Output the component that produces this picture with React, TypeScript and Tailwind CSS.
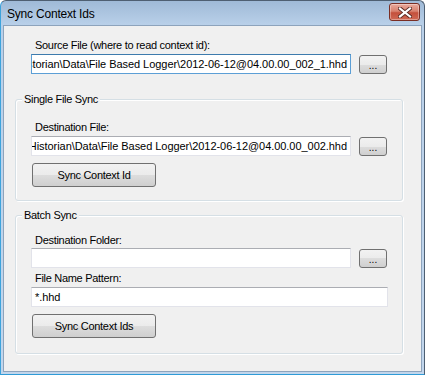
import React from 'react';

const FONT = { fontFamily: '"Liberation Sans", Arial, sans-serif' };

function Label({ children, className = '' }: { children: React.ReactNode; className?: string }) {
  return (
    <div className={`h-[13px] leading-[13px] text-[11px] tracking-[-0.3px] text-black pl-[4px] ${className}`}>
      {children}
    </div>
  );
}

function TextBox({
  children,
  focused = false,
  className = '',
}: {
  children?: React.ReactNode;
  focused?: boolean;
  className?: string;
}) {
  const border = focused
    ? 'border-[#5c9fd6] border-t-[#3d7bad]'
    : 'border-[#e2e3ea] border-t-[#abadb3]';
  return (
    <div
      className={`h-[20px] bg-white border ${border} flex items-center justify-end overflow-hidden whitespace-nowrap pr-[3px] pl-[2px] text-[11px] tracking-[-0.05px] text-black ${className}`}
    >
      {children}
    </div>
  );
}

function BrowseButton({ className = '' }: { className?: string }) {
  return (
    <div
      className={`w-[28px] h-[19px] rounded-[3px] border border-[#707070] bg-[linear-gradient(#f2f2f2_0%,#ebebeb_50%,#dddddd_50%,#cfcfcf_100%)] flex items-end justify-center pb-[3px] text-[10px] leading-[8px] text-black ${className}`}
    >
      ...
    </div>
  );
}

function PushButton({ label, className = '' }: { label: string; className?: string }) {
  return (
    <div
      className={`h-[24px] rounded-[3px] border border-[#707070] bg-[linear-gradient(#f2f2f2_0%,#ebebeb_50%,#dddddd_50%,#cfcfcf_100%)] flex items-center justify-center text-[11px] tracking-[-0.3px] text-black ${className}`}
    >
      {label}
    </div>
  );
}

function GroupBox({ title, children, className = '' }: { title: string; children: React.ReactNode; className?: string }) {
  return (
    <div className={`relative w-[388px] border border-[#d5dfe5] rounded-[3px] shadow-[inset_1px_1px_0_#ffffff,1px_1px_0_#ffffff] ${className}`}>
      <span className="absolute left-[6px] top-[-7px] px-[2px] bg-[#f0f0f0] h-[13px] leading-[13px] text-[11px] tracking-[-0.3px] text-black">
        {title}
      </span>
      {children}
    </div>
  );
}

function CloseGlyph() {
  return (
    <svg width="14" height="11" viewBox="0 0 14 11">
      <path d="M2 1.5 L12 9.5 M12 1.5 L2 9.5" stroke="#5a2a24" strokeWidth="4" strokeLinecap="square" />
      <path d="M2 1.5 L12 9.5 M12 1.5 L2 9.5" stroke="#ffffff" strokeWidth="2.2" strokeLinecap="square" />
    </svg>
  );
}

export default function App() {
  return (
    <div style={FONT} className="w-[425px] h-[375px] bg-white">
      <div className="w-[425px] h-[375px] flex flex-col border border-[#4e5f72] border-b-[#2f9bd7] border-l-[#3da3dc] rounded-t-[6px] bg-[linear-gradient(#9fbad7_0px,#b9d0e9_24px,#c2d6ec_100%)] overflow-hidden">
        {/* title bar */}
        <div className="h-[24px] shrink-0 flex items-center justify-between pl-[6px] pr-[4px]">
          <span className="text-[12px] tracking-[-0.2px] text-black pt-[1px]">Sync Context Ids</span>
          <div className="w-[31px] h-[18px] mt-[-2px] rounded-[3px] border border-[#7a2e24] bg-[linear-gradient(#e9a99c_0%,#d8826f_45%,#c4503c_55%,#cf6a55_100%)] flex items-center justify-center shadow-[inset_0_0_0_1px_rgba(255,255,255,0.35)]">
            <CloseGlyph />
          </div>
        </div>

        {/* client area */}
        <div className="flex-1 mx-[2px] mb-[2px] bg-[#f0f0f0] border border-[#8da3bc] pl-[11px]">
          <Label className="ml-[16px] mt-[13px]">Source File (where to read context id):</Label>
          <div className="flex items-center gap-[8px] ml-[16px] mt-[2px]">
            <TextBox focused className="w-[320px]">
              <span>C:\Program Files\Historian\Data\File Based Logger\2012-06-12@04.00.00_002_1.</span>
              <span className="inline-block w-[1px] h-[13px] bg-black" />
              <span>hhd</span>
            </TextBox>
            <BrowseButton />
          </div>

          <GroupBox title="Single File Sync" className="mt-[25px] pl-[15px] pt-[21px] pb-[13px]">
            <Label>Destination File:</Label>
            <div className="flex items-center gap-[8px] mt-[2px]">
              <TextBox className="w-[320px]">C:\Program Files\Historian\Data\File Based Logger\2012-06-12@04.00.00_002.hhd</TextBox>
              <BrowseButton />
            </div>
            <PushButton label="Sync Context Id" className="w-[124px] mt-[7px] ml-[1px]" />
          </GroupBox>

          <GroupBox title="Batch Sync" className="mt-[14px] pl-[15px] pt-[18px] pb-[15px]">
            <Label>Destination Folder:</Label>
            <div className="flex items-center gap-[8px] mt-[1px]">
              <TextBox className="w-[320px]" />
              <BrowseButton />
            </div>
            <Label className="mt-[4px]">File Name Pattern:</Label>
            <TextBox className="w-[357px] mt-[2px] justify-start pl-[3px]">*.hhd</TextBox>
            <PushButton label="Sync Context Ids" className="w-[124px] mt-[7px] ml-[1px]" />
          </GroupBox>
        </div>
      </div>
    </div>
  );
}
